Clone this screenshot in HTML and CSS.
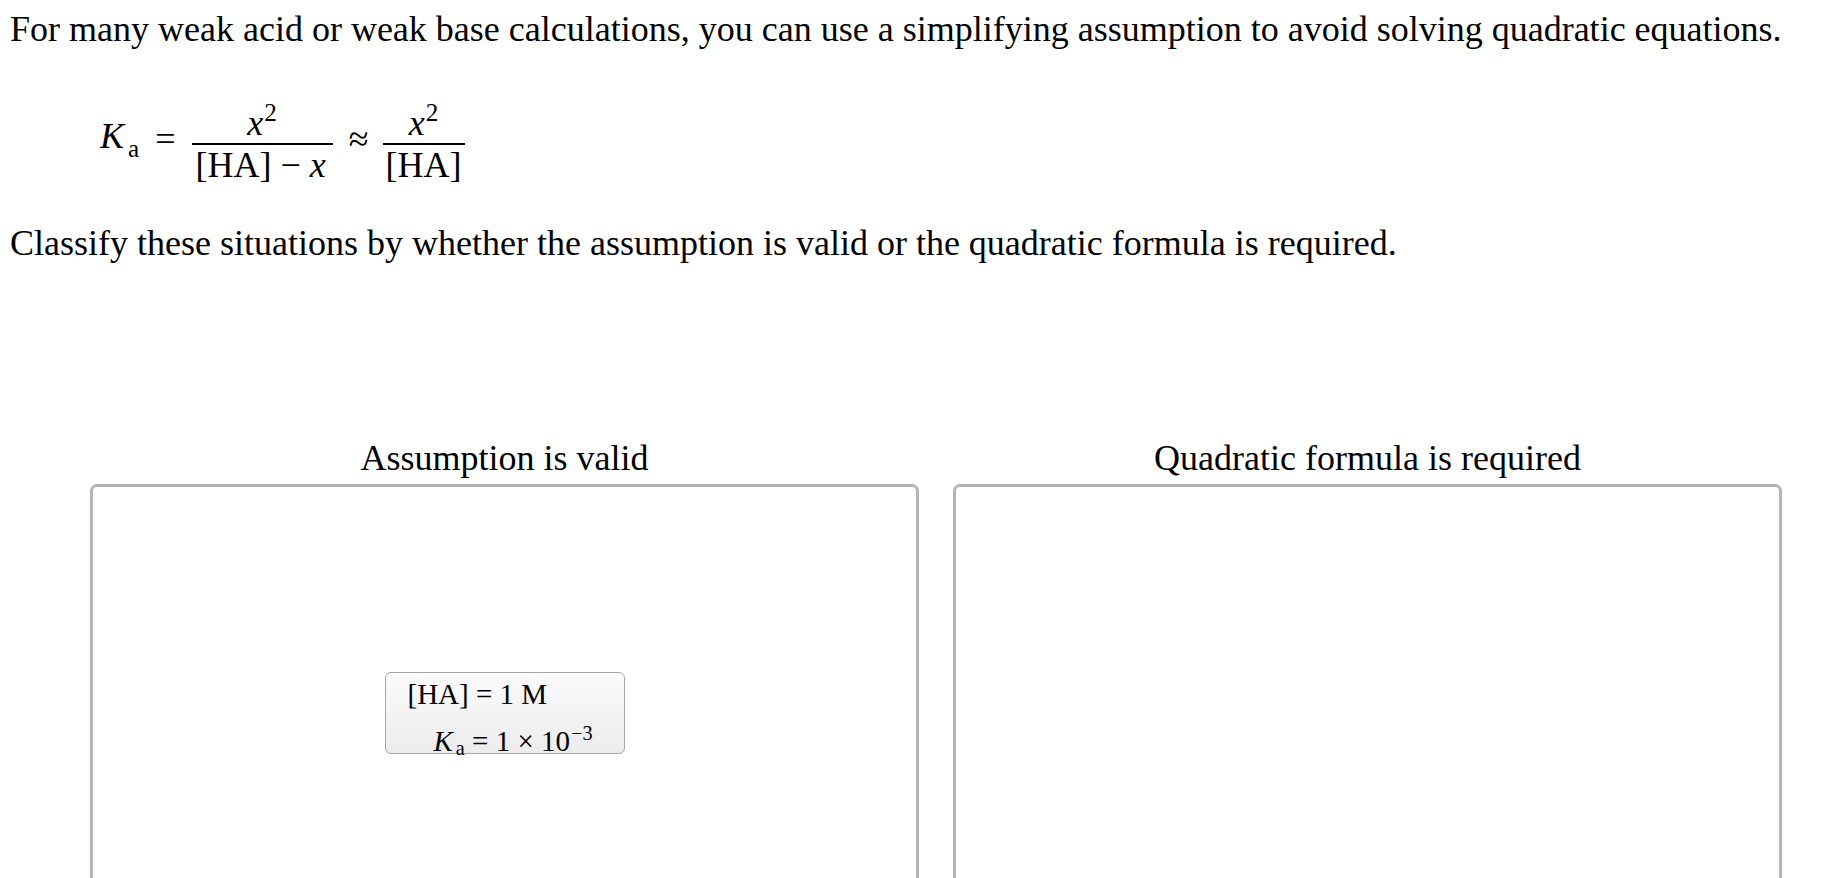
FILE: index.html
```html
<!DOCTYPE html>
<html lang="en">

<head>
    <meta charset="UTF-8">
    <meta name="viewport" content="width=device-width, initial-scale=1.0">
    <title>Weak acid assumption</title>
    <link rel="stylesheet" href="styles.css">
</head>

<body>
    <main class="question">
        <p class="intro">For many weak acid or weak base calculations, you can use a simplifying assumption to avoid solving quadratic equations.</p>

        <div class="equation">
            <span class="ka"><span class="var">K</span><span class="sub">a</span></span>
            <span class="op op--eq">=</span>
            <span class="frac frac--long">
                <span class="num"><span class="var">x</span><span class="sup">2</span></span>
                <span class="den">[HA] − <span class="var">x</span></span>
            </span>
            <span class="op op--approx">≈</span>
            <span class="frac">
                <span class="num"><span class="var">x</span><span class="sup">2</span></span>
                <span class="den">[HA]</span>
            </span>
        </div>

        <p class="prompt">Classify these situations by whether the assumption is valid or the quadratic formula is required.</p>

        <section class="bins">
            <div class="bin">
                <h2 class="bin-title">Assumption is valid</h2>
                <div class="bin-box">
                    <div class="chip">
                        <div class="chip-line">[HA] = 1 M</div>
                        <div class="chip-line chip-line--indent"><span class="var">K</span><span class="sub sub--small">a</span> = 1 × 10<span class="sup">−3</span></div>
                    </div>
                </div>
            </div>
            <div class="bin">
                <h2 class="bin-title">Quadratic formula is required</h2>
                <div class="bin-box"></div>
            </div>
        </section>
    </main>
</body>
</html>
```

FILE: styles.css
```css
body {
    margin: 0;
    background: white;
    color: black;
    font-family: "Liberation Serif", "Times New Roman", serif;
    font-size: 36px;
}

.question {
    padding: 8px 0 0 10px;
}

.intro,
.prompt {
    margin: 0;
    line-height: 42px;
}

.var {
    font-style: italic;
}

.sub {
    font-size: 0.7em;
    vertical-align: -0.35em;
    margin-left: 4px;
}

.sub--small {
    vertical-align: -0.22em;
    margin-left: 3px;
}

.sup {
    font-size: 0.7em;
    vertical-align: 0.55em;
    margin-left: 1px;
}

/* Ka = x2 / ([HA] - x) ~ x2 / [HA] */
.equation {
    display: flex;
    align-items: center;
    margin: 43px 0 0 90px;
}

.op--eq {
    margin: 0 16px 0 16px;
}

.op--approx {
    margin: 0 14px 0 16px;
}

.frac {
    display: inline-flex;
    flex-direction: column;
    align-items: center;
}

.num,
.den {
    padding: 0 3px;
    line-height: 40px;
}

.frac--long .den {
    padding: 0 7px 0 4px;
}

.den {
    border-top: 2px solid black;
}

.prompt {
    margin-top: 37px;
}

.bins {
    display: grid;
    grid-template-columns: 1fr 1fr;
    gap: 34px;
    width: 1692px;
    margin: 173px 0 0 80px;
}

.bin-title {
    margin: 0 0 5px;
    text-align: center;
    font-weight: normal;
    font-size: 36px;
    line-height: 42px;
}

.bin-box {
    height: 458px;
    box-sizing: border-box;
    border: 3px solid #b4b4b4;
    border-radius: 7px;
    display: flex;
    justify-content: center;
    align-items: center;
}

.chip {
    width: 240px;
    height: 82px;
    box-sizing: border-box;
    padding: 2px 0 0 22px;
    border: 1.5px solid #a6a6a6;
    border-radius: 6px;
    background: linear-gradient(to bottom, #fbfbfb, #ececec);
    font-size: 29px;
}

.chip-line {
    line-height: 39px;
    white-space: nowrap;
}

.chip-line--indent {
    padding-left: 26px;
}
```
